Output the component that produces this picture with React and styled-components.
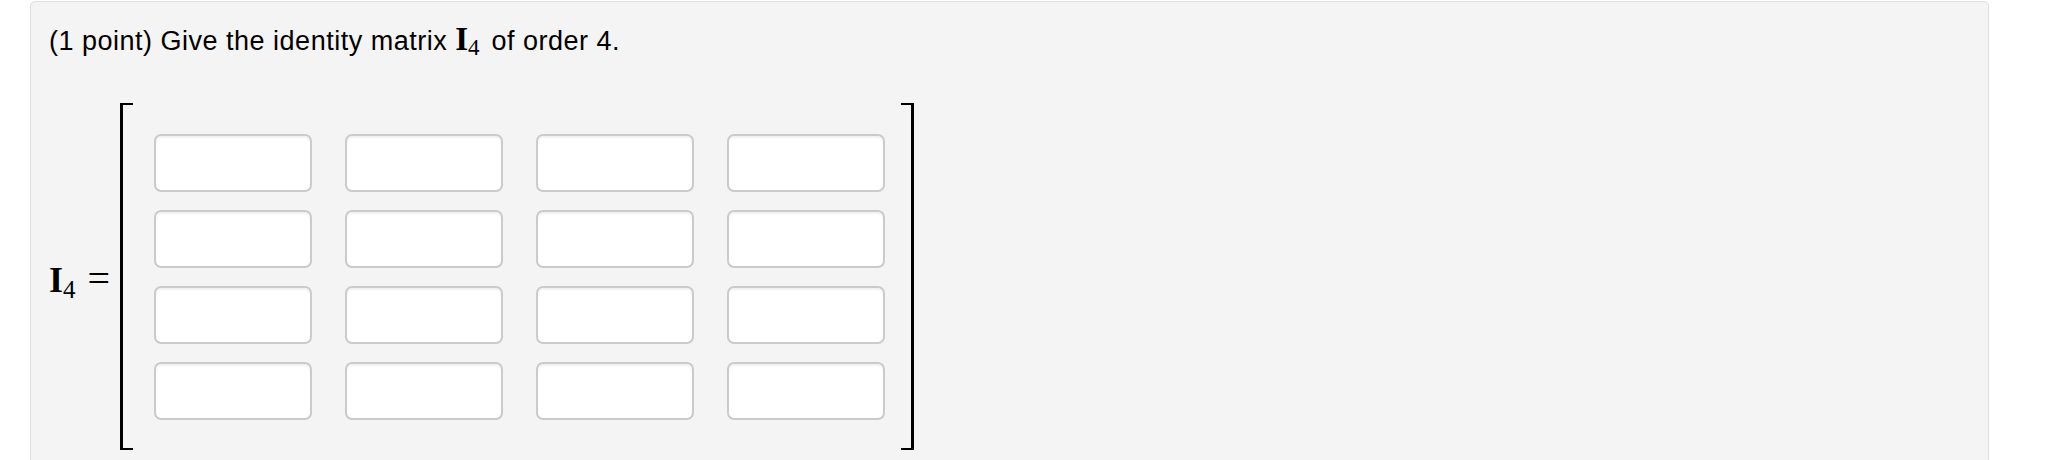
import React from 'react'
import styled, { createGlobalStyle } from 'styled-components'

const GlobalStyle = createGlobalStyle`
  html, body {
    margin: 0;
    padding: 0;
    background: #fff;
  }
  body {
    font-family: 'Liberation Sans', Arial, sans-serif;
    color: #000;
  }
`

const Page = styled.div`
  padding: 1px 0 0 30px;
  height: 460px;
  box-sizing: border-box;
  overflow: hidden;
`

const Problem = styled.div`
  width: 1959px;
  height: 480px;
  box-sizing: border-box;
  background: #f4f4f4;
  border: 1px solid #e0e0e0;
  border-radius: 5px;
  box-shadow: 0 1px 2px rgba(0, 0, 0, 0.05);
  padding: 22px 18px 0;
`

const Question = styled.p`
  margin: 0;
  font-size: 27px;
  line-height: 30px;
  letter-spacing: 0.5px;
  white-space: nowrap;
`

const MathBold = styled.span`
  font-family: 'Liberation Serif', 'Times New Roman', serif;
  font-weight: bold;
  font-size: ${p => p.size || 33}px;
  letter-spacing: 0;
`

const Sub = styled.sub`
  font-family: 'Liberation Serif', 'Times New Roman', serif;
  font-weight: normal;
  font-size: ${p => p.size || 23}px;
  vertical-align: ${p => p.drop || -5}px;
  line-height: 0;
  letter-spacing: 0;
  margin-right: ${p => p.gap || 0}px;
`

const Equation = styled.div`
  display: flex;
  align-items: center;
  margin-top: 47px;
`

const Label = styled.div`
  font-family: 'Liberation Serif', 'Times New Roman', serif;
  line-height: 40px;
  padding-top: 12px;
  margin-right: 10px;
  white-space: nowrap;
`

const Equals = styled.span`
  font-size: 40px;
  margin-left: 12px;
`

const Bracket = styled.div`
  align-self: stretch;
  width: 13px;
  box-sizing: border-box;
  border-top: 2px solid #000;
  border-bottom: 2px solid #000;
  border-${p => p.side}: 3px solid #000;
`

const Grid = styled.div`
  display: grid;
  grid-template-columns: repeat(4, 158px);
  column-gap: 33px;
  row-gap: 18px;
  padding: 31px 0 30px;
  margin: 0 16px 0 21px;
`

const Cell = styled.input`
  width: 158px;
  height: 58px;
  box-sizing: border-box;
  margin: 0;
  border: 2px solid #cbcbcb;
  border-radius: 7px;
  background: #fff;
  box-shadow: inset 0 2px 2px rgba(0, 0, 0, 0.06);
  outline: none;
  font-size: 20px;
`

export default function App() {
  const cells = Array.from({ length: 16 }, (_, i) => i)
  return (
    <Page>
      <GlobalStyle />
      <Problem>
        <Question>
          (1 point) Give the identity matrix <MathBold>I</MathBold>
          <Sub gap={12}>4</Sub>of order 4.
        </Question>
        <Equation>
          <Label>
            <MathBold size={36}>I</MathBold>
            <Sub size={25} drop={-6}>4</Sub>
            <Equals>=</Equals>
          </Label>
          <Bracket side="left" />
          <Grid>
            {cells.map(i => (
              <Cell key={i} type="text" aria-label={`entry ${Math.floor(i / 4) + 1},${(i % 4) + 1}`} />
            ))}
          </Grid>
          <Bracket side="right" />
        </Equation>
      </Problem>
    </Page>
  )
}
